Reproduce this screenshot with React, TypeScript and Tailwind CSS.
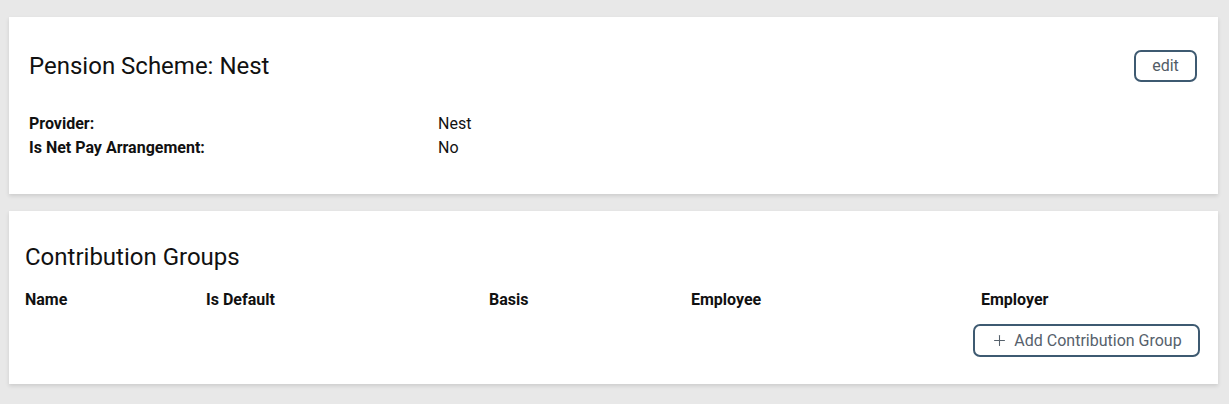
import { Plus } from 'lucide-react';

export default function App() {
  const details = [
    { label: 'Provider:', value: 'Nest' },
    { label: 'Is Net Pay Arrangement:', value: 'No' },
  ];

  const columns = ['Name', 'Is Default', 'Basis', 'Employee', 'Employer'];

  return (
    <div
      className="min-h-[404px] bg-[#e8e8e8] pt-[17px] pl-[9px] pr-[11px] pb-[21px] flex flex-col gap-[17px] text-[#111]"
      style={{ fontFamily: 'Roboto, "Liberation Sans", sans-serif' }}
    >
      {/* Scheme details */}
      <div className="bg-white shadow-[0_2px_4px_rgba(0,0,0,0.12)] pt-[33px] pb-[34px] px-5">
        <div className="flex items-center justify-between h-8">
          <h1 className="text-[24px] leading-[30px] font-normal">Pension Scheme: Nest</h1>
          <button className="h-8 w-[63px] mr-[1px] rounded-[7px] border-2 border-[#3e5a71] text-[16px] text-[#525c66] flex items-center justify-center">
            edit
          </button>
        </div>
        <div className="mt-[30px]">
          {details.map(d => (
            <div key={d.label} className="flex text-[16px] leading-6">
              <span className="w-[409px] font-bold">{d.label}</span>
              <span>{d.value}</span>
            </div>
          ))}
        </div>
      </div>

      {/* Contribution groups */}
      <div className="bg-white shadow-[0_2px_4px_rgba(0,0,0,0.12)] pt-[31px] pb-[27px] px-4">
        <h2 className="text-[24px] leading-[30px] font-normal">Contribution Groups</h2>
        <div className="mt-[16px] grid grid-cols-[181px_283px_202px_290px_1fr] text-[16px] leading-6 font-bold">
          {columns.map(c => (
            <span key={c}>{c}</span>
          ))}
        </div>
        <div className="mt-[12px] flex justify-end">
          <button className="h-[33px] w-[227px] mr-[2px] rounded-[7px] border-2 border-[#3e5a71] text-[16px] text-[#56616c] flex items-center justify-center gap-[6px]">
            <Plus className="w-[17px] h-[17px]" strokeWidth={1.5} />
            Add Contribution Group
          </button>
        </div>
      </div>
    </div>
  );
}
